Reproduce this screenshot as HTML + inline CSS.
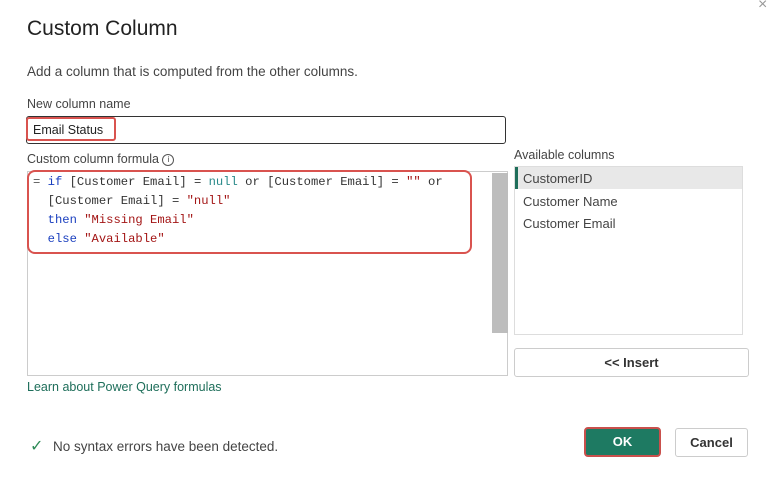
<!DOCTYPE html>
<html><head><style>
body{margin:0;width:768px;height:478px;background:#fff;font-family:"Liberation Sans",sans-serif;position:relative;overflow:hidden;color:#333}
.a{position:absolute}
.mono{font-family:"Liberation Mono",monospace;font-size:12.2px;line-height:19px;color:#333;white-space:pre}
.kw{color:#1a3fbf}.nl{color:#2a8a8a}.st{color:#a31515}
</style></head><body>
<div class="a" style="left:27px;top:17px;font-size:21px;color:#222">Custom Column</div>
<div class="a" style="left:758px;top:-4px;font-size:16px;color:#999">×</div>
<div class="a" style="left:27px;top:64px;font-size:13.5px;color:#444">Add a column that is computed from the other columns.</div>
<div class="a" style="left:27px;top:97px;font-size:12.5px;color:#444">New column name</div>
<div class="a" style="left:26px;top:116px;width:478px;height:26px;border:1px solid #333;border-radius:3px"></div>
<div class="a" style="left:26px;top:117px;width:90px;height:24px;border:2px solid #d9534f;border-radius:3px;box-sizing:border-box"></div>
<div class="a" style="left:33px;top:123px;font-size:12.5px;color:#222">Email Status</div>
<div class="a" style="left:27px;top:152px;font-size:12.5px;color:#444">Custom column formula <span style="display:inline-block;width:10px;height:10px;border:1px solid #555;border-radius:50%;font-size:8px;line-height:10px;text-align:center;vertical-align:middle">i</span></div>
<div class="a" style="left:27px;top:171px;width:481px;height:205px;border:1px solid #ccc;box-sizing:border-box"></div>
<div class="a" style="left:492px;top:173px;width:16px;height:160px;background:#bdbdbd"></div>
<div class="a" style="left:27px;top:170px;width:445px;height:84px;border:2px solid #d9534f;border-radius:8px;box-sizing:border-box"></div>
<div class="a mono" style="left:33px;top:173px"><span style="color:#555">=</span> <span class="kw">if</span> [Customer Email] = <span class="nl">null</span> or [Customer Email] = <span class="st">""</span> or
  [Customer Email] = <span class="st">"null"</span>
  <span class="kw">then</span> <span class="st">"Missing Email"</span>
  <span class="kw">else</span> <span class="st">"Available"</span></div>
<div class="a" style="left:514px;top:148px;font-size:12.5px;color:#444">Available columns</div>
<div class="a" style="left:514px;top:166px;width:229px;height:169px;border:1px solid #ddd;box-sizing:border-box"></div>
<div class="a" style="left:515px;top:167px;width:227px;height:22px;background:#e8e8e8;border-left:3px solid #1e6e5a;box-sizing:border-box"></div>
<div class="a" style="left:523px;top:168px;font-size:13px;color:#444;line-height:22.5px">CustomerID<br>Customer Name<br>Customer Email</div>
<div class="a" style="left:514px;top:348px;width:235px;height:29px;border:1px solid #ccc;border-radius:3px;box-sizing:border-box;text-align:center;line-height:27px;font-size:13px;font-weight:bold;color:#333">&lt;&lt; Insert</div>
<div class="a" style="left:27px;top:380px;font-size:12.5px;color:#1e6e5a">Learn about Power Query formulas</div>
<div class="a" style="left:30px;top:436px;font-size:16px;color:#2e8b57">✓</div>
<div class="a" style="left:53px;top:439px;font-size:13.5px;color:#444">No syntax errors have been detected.</div>
<div class="a" style="left:584px;top:427px;width:77px;height:30px;background:#1e7a62;border:2px solid #c9504c;border-radius:4px;box-sizing:border-box;color:#fff;font-weight:bold;font-size:13px;text-align:center;line-height:26px">OK</div>
<div class="a" style="left:675px;top:428px;width:73px;height:29px;border:1px solid #ccc;border-radius:3px;box-sizing:border-box;text-align:center;line-height:27px;font-size:13px;font-weight:bold;color:#333">Cancel</div>
</body></html>
